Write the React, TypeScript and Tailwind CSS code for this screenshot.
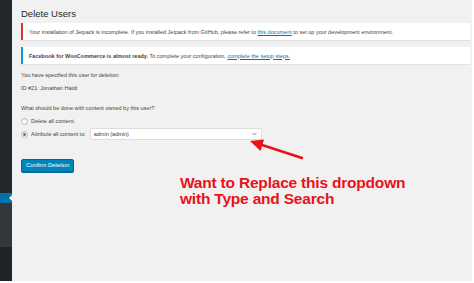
import React from "react";

const font = { fontFamily: '"Liberation Sans", Arial, sans-serif' };

function Notice({ color, children }: { color: string; children: React.ReactNode }) {
  return (
    <div
      className={`h-[17px] bg-white flex items-center pl-[6px] border-l-[2px] shadow-[0_1px_1px_rgba(0,0,0,0.06)] ${color}`}
    >
      <p className="text-[5.5px] leading-[8px] text-[#444]">{children}</p>
    </div>
  );
}

function Radio({ checked }: { checked?: boolean }) {
  return (
    <span className="w-[7px] h-[7px] rounded-full border border-[#b4b9be] bg-white flex items-center justify-center shadow-[inset_0_1px_1px_rgba(0,0,0,0.1)]">
      {checked && <span className="w-[3px] h-[3px] rounded-full bg-[#1e8cbe]" />}
    </span>
  );
}

export default function App() {
  return (
    <div className="w-[474px] h-[283px] bg-white overflow-hidden relative" style={font}>
      <div className="flex w-[472px] h-[281px]">
        {/* admin menu strip */}
        <aside className="w-[12px] flex flex-col bg-[#23282d]">
          <div className="h-[193px]" />
          <div className="h-[10px] bg-[#0073aa] relative">
            <span className="absolute right-0 top-[2px] w-0 h-0 border-y-[3px] border-y-transparent border-r-[3px] border-r-[#f1f1f1]" />
          </div>
          <div className="h-[44px] bg-[#32373c]" />
          <div className="flex-1 bg-[#1e2328]" />
        </aside>

        <main className="flex-1 bg-[#f1f1f1] pl-[9px] pr-[2px] pt-[8px] text-[#444]">
          <h1 className="text-[9.5px] leading-[12px] text-[#23282d] font-normal">Delete Users</h1>

          <div className="mt-[3px]">
            <Notice color="border-[#dc3232]">
              Your installation of Jetpack is incomplete. If you installed Jetpack from GitHub, please refer to{" "}
              <span className="text-[#0073aa] underline">this document</span> to set up your development
              environment.
            </Notice>
          </div>
          <div className="mt-[7px]">
            <Notice color="border-[#00a0d2]">
              <b className="font-bold">Facebook for WooCommerce is almost ready.</b> To complete your configuration,{" "}
              <span className="text-[#0073aa] underline">complete the setup steps.</span>
            </Notice>
          </div>

          <p className="mt-[7px] text-[5.5px] leading-[8px]">You have specified this user for deletion:</p>
          <p className="mt-[5px] text-[5.5px] leading-[8px]">ID #21: Jonathan Haidt</p>
          <p className="mt-[12px] text-[5.5px] leading-[8px]">What should be done with content owned by this user?</p>

          <div className="mt-[4px] h-[10px] flex items-center gap-[3px] text-[5.5px]">
            <Radio />
            <span>Delete all content.</span>
          </div>
          <div className="mt-[2px] h-[12px] flex items-center gap-[3px] text-[5.5px]">
            <Radio checked />
            <span>Attribute all content to:</span>
            <div className="ml-[1px] w-[172px] h-[12px] bg-white border border-[#ddd] rounded-[2px] flex items-center justify-between pl-[3px] pr-[4px] text-[#32373c]">
              <span>admin (admin)</span>
              <svg width="5" height="4" viewBox="0 0 5 4">
                <path d="M0.6 1 L2.5 3 L4.4 1" fill="none" stroke="#6b6b6b" strokeWidth="0.8" />
              </svg>
            </div>
          </div>

          <button className="mt-[19px] h-[13px] px-[4px] bg-[#0085ba] border border-[#006799] rounded-[2px] text-white text-[5.8px] leading-none shadow-[0_1px_0_#006799]">
            Confirm Deletion
          </button>

          <div className="mt-[1px] ml-[159px] text-[15.5px] leading-[16px] font-bold text-[#e8121a] tracking-[-0.2px]">
            <p>Want to Replace this dropdown</p>
            <p>with Type and Search</p>
          </div>
        </main>
      </div>

      {/* annotation arrow */}
      <svg className="absolute left-0 top-0 pointer-events-none" width="474" height="283" viewBox="0 0 474 283">
        <line x1="302" y1="158" x2="259" y2="144" stroke="#e8121a" strokeWidth="2.4" strokeLinecap="round" />
        <polygon points="250,141 264,139.5 260.5,151" fill="#e8121a" />
      </svg>
    </div>
  );
}
